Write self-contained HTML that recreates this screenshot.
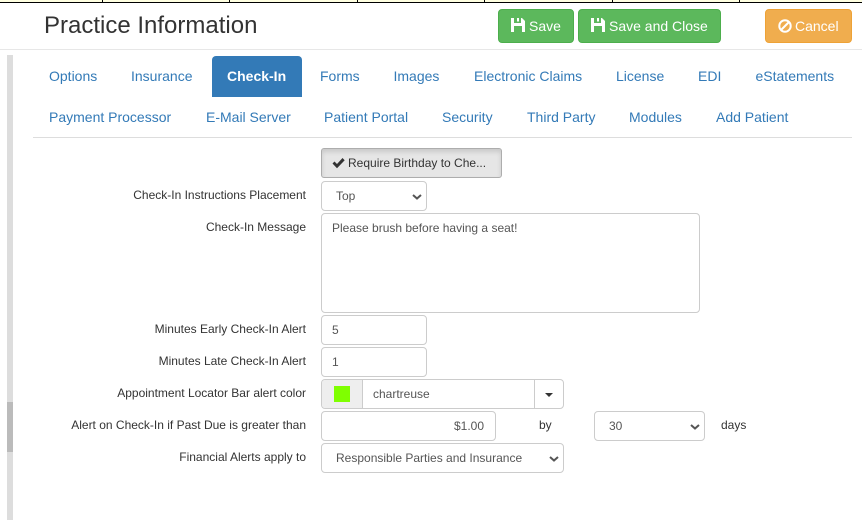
<!DOCTYPE html>
<html><head><meta charset="utf-8"><style>
html,body{margin:0;padding:0;background:#fff;width:862px;height:520px;overflow:hidden;font-family:"Liberation Sans",Arial,sans-serif;}
.a{position:absolute;box-sizing:border-box;white-space:nowrap}
.tab{position:absolute;font-size:14px;line-height:20px;color:#337ab7;white-space:nowrap}
.lbl{position:absolute;right:556px;font-size:12px;line-height:16px;color:#333;white-space:nowrap}
.box{position:absolute;box-sizing:border-box;background:#fff;border:1px solid #ccc;border-radius:4px;font-size:12px;color:#555;white-space:nowrap}
.btn{position:absolute;box-sizing:border-box;border-radius:4px;color:#fff;font-size:14px;line-height:20px;height:34px;top:9px;white-space:nowrap}
.btn span{position:absolute;top:6px}
.btn svg{position:absolute}
.chev{position:absolute;top:12px}
</style></head><body>
<div class="a" style="left:0;top:0;width:862px;height:2px;background:#ffffe1"></div>
<div class="a" style="left:0;top:2px;width:862px;height:1px;background:#000"></div>
<div class="a" style="left:102px;top:0;width:1px;height:2px;background:#000"></div>
<div class="a" style="left:229px;top:0;width:1px;height:2px;background:#000"></div>
<div class="a" style="left:357px;top:0;width:1px;height:2px;background:#000"></div>
<div class="a" style="left:484px;top:0;width:1px;height:2px;background:#000"></div>
<div class="a" style="left:612px;top:0;width:1px;height:2px;background:#000"></div>
<div class="a" style="left:739px;top:0;width:1px;height:2px;background:#000"></div>

<div class="a" style="left:44px;top:12px;font-size:24px;line-height:28px;color:#333">Practice Information</div>
<div class="a" style="left:0;top:49px;width:862px;height:1px;background:#e7e7e7"></div>

<div class="btn" style="left:498px;width:76px;background:#5cb85c;border:1px solid #4cae4c">
<svg style="left:12px;top:8px" width="14" height="14" viewBox="0 0 14 14"><path fill="#fff" fill-rule="evenodd" d="M0 0H11L14 3V14H0ZM3 0V5H10V0H8V3.500H6V0ZM3 8V14H11V8Z"/></svg>
<span style="left:30px">Save</span></div>
<div class="btn" style="left:578px;width:143px;background:#5cb85c;border:1px solid #4cae4c">
<svg style="left:12px;top:8px" width="14" height="14" viewBox="0 0 14 14"><path fill="#fff" fill-rule="evenodd" d="M0 0H11L14 3V14H0ZM3 0V5H10V0H8V3.500H6V0ZM3 8V14H11V8Z"/></svg>
<span style="left:30px">Save and Close</span></div>
<div class="btn" style="left:765px;width:87px;background:#f0ad4e;border:1px solid #eea236">
<svg style="left:12px;top:9px" width="14" height="14" viewBox="0 0 14 14"><circle cx="7" cy="7" r="5.700" fill="none" stroke="#fff" stroke-width="2"/><path d="M3 11L11 3" stroke="#fff" stroke-width="2"/></svg>
<span style="left:29px">Cancel</span></div>

<div class="a" style="left:7px;top:55px;width:6px;height:465px;background:#ddd"></div>
<div class="a" style="left:7px;top:402px;width:6px;height:50px;background:#bbb"></div>

<div class="tab" style="left:49px;top:66px">Options</div>
<div class="tab" style="left:131px;top:66px">Insurance</div>
<div class="a" style="left:212px;top:56px;width:89.500px;height:41px;background:#337ab7;border-radius:4px 4px 0 0"></div>
<div class="tab" style="left:227px;top:66px;color:#fff;font-weight:bold">Check-In</div>
<div class="tab" style="left:320px;top:66px">Forms</div>
<div class="tab" style="left:393.500px;top:66px">Images</div>
<div class="tab" style="left:474px;top:66px">Electronic Claims</div>
<div class="tab" style="left:616px;top:66px">License</div>
<div class="tab" style="left:698px;top:66px">EDI</div>
<div class="tab" style="left:755.500px;top:66px">eStatements</div>

<div class="tab" style="left:49px;top:107px">Payment Processor</div>
<div class="tab" style="left:206px;top:107px">E-Mail Server</div>
<div class="tab" style="left:324px;top:107px">Patient Portal</div>
<div class="tab" style="left:442px;top:107px">Security</div>
<div class="tab" style="left:527px;top:107px">Third Party</div>
<div class="tab" style="left:629px;top:107px">Modules</div>
<div class="tab" style="left:716px;top:107px">Add Patient</div>
<div class="a" style="left:33px;top:137px;width:819px;height:1px;background:#ddd"></div>

<div class="a" style="left:321px;top:148px;width:181px;height:30px;background:#e6e6e6;border:1px solid #adadad;border-radius:3px;box-shadow:inset 0 3px 5px rgba(0,0,0,.125);font-size:12px;color:#333;line-height:28px;padding-left:26px">Require Birthday to Che...
<svg style="position:absolute;left:10px;top:8px" width="13" height="12" viewBox="0 0 13 12"><path fill="#333" d="M0.500 6.500L2.500 4.500L5 7L10.500 1L12.700 3.200L5 11.200Z"/></svg></div>

<div class="lbl" style="top:187px">Check-In Instructions Placement</div>
<div class="box" style="left:321px;top:181px;width:106px;height:30px;line-height:28px;padding-left:14px">Top
<svg class="chev" style="left:90px;top:12px" width="10" height="6" viewBox="0 0 10 6"><path d="M1 1L5 4.500L9 1" fill="none" stroke="#555" stroke-width="2"/></svg></div>

<div class="lbl" style="top:219px">Check-In Message</div>
<div class="box" style="left:321px;top:213px;width:379px;height:100px;padding:6px 10px;line-height:17px">Please brush before having a seat!</div>

<div class="lbl" style="top:321px">Minutes Early Check-In Alert</div>
<div class="box" style="left:321px;top:315px;width:106px;height:30px;line-height:28px;padding-left:10px">5</div>

<div class="lbl" style="top:353px">Minutes Late Check-In Alert</div>
<div class="box" style="left:321px;top:347px;width:106px;height:30px;line-height:28px;padding-left:10px">1</div>

<div class="lbl" style="top:385px">Appointment Locator Bar alert color</div>
<div class="box" style="left:321px;top:379px;width:243px;height:30px;line-height:28px">
<div class="a" style="left:0;top:0;width:41px;height:28px;background:#eee;border-right:1px solid #ccc;border-radius:3px 0 0 3px"></div>
<div class="a" style="left:12px;top:6px;width:16px;height:16px;background:#7fff00"></div>
<div class="a" style="left:51px;top:0;line-height:28px">chartreuse</div>
<div class="a" style="left:212px;top:0;width:1px;height:28px;background:#ccc"></div>
<div class="a" style="left:223px;top:13px;width:0;height:0;border-left:4px solid transparent;border-right:4px solid transparent;border-top:4px solid #333"></div>
</div>

<div class="lbl" style="top:417px">Alert on Check-In if Past Due is greater than</div>
<div class="box" style="left:321px;top:411px;width:175px;height:30px;line-height:28px;text-align:right;padding-right:11px">$1.00</div>
<div class="a" style="left:539px;top:417px;font-size:12px;line-height:16px;color:#333">by</div>
<div class="box" style="left:594px;top:411px;width:111px;height:30px;line-height:28px;padding-left:14px">30
<svg class="chev" style="left:95px;top:12px" width="10" height="6" viewBox="0 0 10 6"><path d="M1 1L5 4.500L9 1" fill="none" stroke="#555" stroke-width="2"/></svg></div>
<div class="a" style="left:721px;top:417px;font-size:12px;line-height:16px;color:#333">days</div>

<div class="lbl" style="top:449px">Financial Alerts apply to</div>
<div class="box" style="left:321px;top:443px;width:243px;height:30px;line-height:28px;padding-left:14px">Responsible Parties and Insurance
<svg class="chev" style="left:227px;top:12px" width="10" height="6" viewBox="0 0 10 6"><path d="M1 1L5 4.500L9 1" fill="none" stroke="#555" stroke-width="2"/></svg></div>
</body></html>
